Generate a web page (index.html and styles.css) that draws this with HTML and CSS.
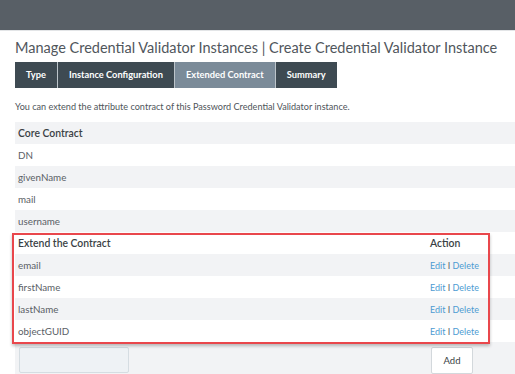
FILE: index.html
```html
<!DOCTYPE html>
<html>
<head>
<meta charset="utf-8">
<link rel="stylesheet" href="styles.css">
</head>
<body>
<header class="topbar"></header>
<main class="page">
  <h1 class="title">Manage Credential Validator Instances | Create Credential Validator Instance</h1>
  <nav class="tabs">
    <div class="tab">Type</div>
    <div class="tab">Instance Configuration</div>
    <div class="tab active">Extended Contract</div>
    <div class="tab">Summary</div>
  </nav>
  <p class="desc">You can extend the attribute contract of this Password Credential Validator instance.</p>
  <div class="table">
    <div class="row head"><span>Core Contract</span></div>
    <div class="row"><span>DN</span></div>
    <div class="row"><span>givenName</span></div>
    <div class="row"><span>mail</span></div>
    <div class="row"><span>username</span></div>
  </div>
  <div class="table extend">
    <div class="row head"><span>Extend the Contract</span><span>Action</span></div>
    <div class="row"><span>email</span><span class="act"><a>Edit</a> I <a>Delete</a></span></div>
    <div class="row"><span>firstName</span><span class="act"><a>Edit</a> I <a>Delete</a></span></div>
    <div class="row"><span>lastName</span><span class="act"><a>Edit</a> I <a>Delete</a></span></div>
    <div class="row"><span>objectGUID</span><span class="act"><a>Edit</a> I <a>Delete</a></span></div>
    <div class="row addrow"><span><span class="input"></span></span><span><span class="btn">Add</span></span></div>
    <div class="highlight"></div>
  </div>
</main>
</body>
</html>
```
FILE: styles.css
```css
html, body {
  margin: 0;
  padding: 0;
  background: #ffffff;
  font-family: Lato, "Open Sans", "Liberation Sans", sans-serif;
  overflow: hidden;
}
.topbar {
  height: 30px;
  background: #585f66;
  border-bottom: 1px solid #e3e5e7;
}
.page {
  padding-left: 15px;
}
.title {
  margin: 0;
  padding-top: 5px;
  height: 26px;
  font-size: 14.5px;
  font-weight: 400;
  color: #50565c;
  line-height: 24px;
  white-space: nowrap;
}
.tabs {
  display: flex;
  height: 26px;
}
.tab {
  background: #3e4a52;
  color: #ffffff;
  font-size: 9.3px;
  font-weight: 700;
  padding: 0 11px;
  line-height: 26px;
  border-right: 1px solid #bcc4ca;
}
.tab:last-child { border-right: none; }
.tab.active { background: #7b8b99; }
.desc {
  margin: 0;
  padding-top: 12px;
  height: 22px;
  font-size: 9.1px;
  color: #4f555a;
  line-height: 14px;
}
.table {
  width: 500px;
}
.extend {
  position: relative;
}
.row {
  display: grid;
  grid-template-columns: 412px 1fr;
  height: 22px;
  align-items: center;
  font-size: 9.8px;
  color: #5a6066;
  padding-left: 3px;
}
.table .row:nth-child(odd) { background: #f2f3f5; }
.extend .row:nth-child(odd) { background: #ffffff; }
.extend .row:nth-child(even) { background: #f2f3f5; }
.row.head {
  font-size: 10.4px;
  font-weight: 600;
  color: #3a3f44;
}
.act { color: #5a6066; font-size: 9px; }
.act a { color: #4d9bd2; }
.row.addrow {
  height: 34px;
  align-items: start;
  padding-top: 5px;
  box-sizing: border-box;
}
.input {
  display: block;
  width: 110px;
  height: 26px;
  margin-left: 1px;
  box-sizing: border-box;
  background: #eef2f5;
  border: 1px solid #d5dde2;
  border-radius: 2px;
}
.btn {
  display: inline-block;
  width: 42px;
  height: 27px;
  box-sizing: border-box;
  background: #ffffff;
  border: 1px solid #d3d8dc;
  border-radius: 2px;
  text-align: center;
  line-height: 25px;
  font-size: 9.5px;
  color: #3a3f44;
  margin-left: 1px;
}
.highlight {
  position: absolute;
  left: -3px;
  top: 1px;
  width: 478px;
  height: 111px;
  box-sizing: border-box;
  border: 2px solid #e9474c;
  box-shadow: 0 2px 3px rgba(0, 0, 0, 0.25);
  pointer-events: none;
}
```
